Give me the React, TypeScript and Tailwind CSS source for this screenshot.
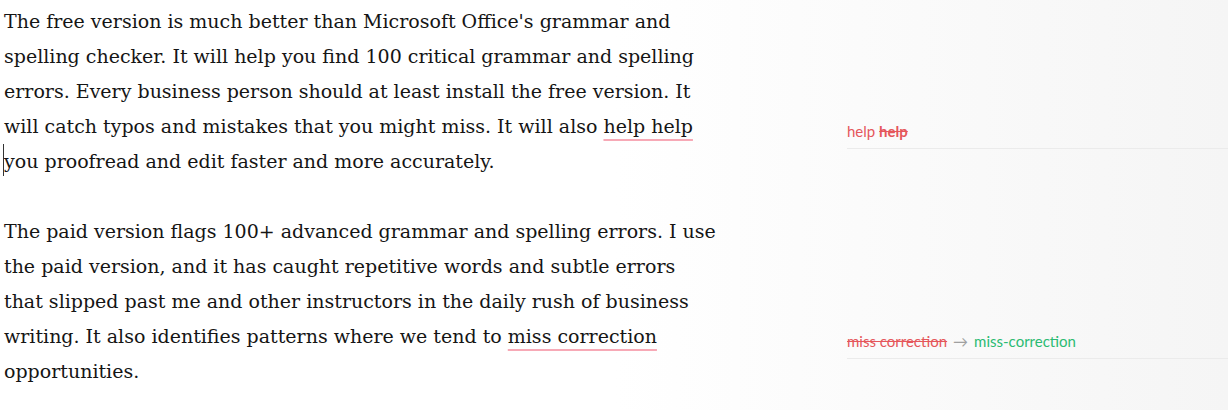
const serif = { fontFamily: '"DejaVu Serif", serif' };

function Flag({ children }: { children: React.ReactNode }) {
  return (
    <span className="underline decoration-[#f7a9b6] decoration-2 underline-offset-[6px]">
      {children}
    </span>
  );
}

export default function App() {
  return (
    <div className="flex h-[410px] w-[1228px] overflow-hidden bg-gradient-to-r from-white from-50% to-[#f5f5f5]">
      <div
        className="w-[760px] shrink-0 pl-[4px] pt-[4px] text-[19px] leading-[35px] text-[#151515] whitespace-nowrap"
        style={serif}
      >
        <p>
          The free version is much better than Microsoft Office's grammar and
          <br />
          spelling checker. It will help you find 100 critical grammar and spelling
          <br />
          errors. Every business person should at least install the free version. It
          <br />
          will catch typos and mistakes that you might miss. It will also <Flag>help help</Flag>
          <br />
          <span className="relative">
            <span className="absolute left-[-1px] top-[-6px] h-[32px] w-px bg-[#333]" />
            you
          </span>{' '}
          proofread and edit faster and more accurately.
        </p>
        <p className="mt-[35px]">
          The paid version flags 100+ advanced grammar and spelling errors. I use
          <br />
          the paid version, and it has caught repetitive words and subtle errors
          <br />
          that slipped past me and other instructors in the daily rush of business
          <br />
          writing. It also identifies patterns where we tend to <Flag>miss correction</Flag>
          <br />
          opportunities.
        </p>
      </div>

      <div
        className="flex-1 pl-[87px] pt-[121px] text-[15px] leading-[20px]"
        style={{ fontFamily: 'Lato, "Open Sans", sans-serif' }}
      >
        <div className="border-b border-[#ebebeb] pb-[7px]">
          <span className="text-[#e5575b]">help </span>
          <span className="font-bold text-[#e5575b] line-through">help</span>
        </div>
        <div className="mt-[182px] border-b border-[#ebebeb] pb-[7px]">
          <span className="text-[#e5575b] line-through">miss correction</span>
          <span className="mx-[6px] text-[#a0a0a0]">→</span>
          <span className="text-[#2bbb72]">miss-correction</span>
        </div>
      </div>
    </div>
  );
}
